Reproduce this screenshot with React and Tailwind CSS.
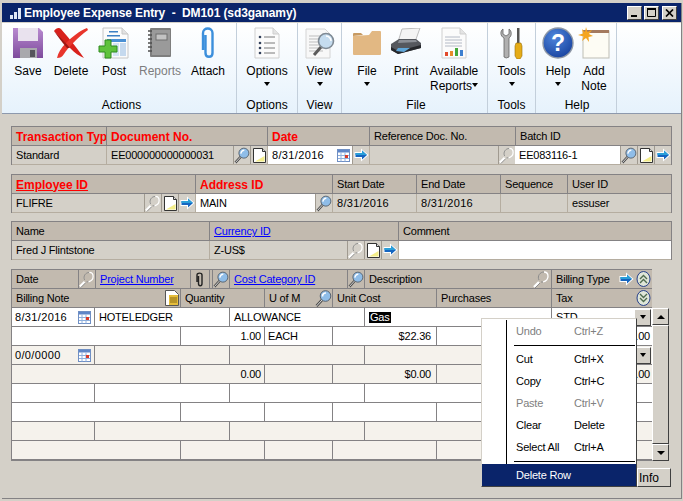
import React from "react";

const font = "[font-family:'Liberation_Sans',Arial,sans-serif]";

/* ---------- ribbon icons ---------- */
const SaveIcon = () => (
  <svg width="32" height="32" viewBox="0 0 32 32">
    <defs>
      <linearGradient id="fl" x1="0" y1="0" x2="0" y2="1">
        <stop offset="0" stopColor="#b98ad0" />
        <stop offset="1" stopColor="#7d4b9c" />
      </linearGradient>
    </defs>
    <path d="M1 1h26l4 4v26H1z" fill="url(#fl)" />
    <rect x="6" y="1" width="20" height="13" fill="#e9e2ee" />
    <rect x="8" y="21" width="17" height="10" fill="#a9a9ad" />
    <rect x="18" y="23" width="5" height="7" fill="#55555c" />
  </svg>
);

const DeleteIcon = () => (
  <svg width="34" height="32" viewBox="0 0 34 32">
    <path d="M0 4 C2 1 5 0 7 2 C13 9 20 17 30 31 C25 29 21 26 16 21 C10 15 5 10 0 4z" fill="#d8211c" />
    <path d="M33 1 C25 4 18 10 12 16 C7 21 4 26 3 31 C6 31 8 30 10 27 C14 21 23 11 34 3z" fill="#e8352c" />
    <path d="M0 4 C5 9 11 15 16 21 L13 21 C8 15 4 10 0 4z" fill="#9c1512" />
  </svg>
);

const PostIcon = () => (
  <svg width="32" height="32" viewBox="0 0 32 32">
    <path d="M5 1h19l6 6v24H5z" fill="#fbfbfb" stroke="#c6c6c6" />
    <path d="M24 1v6h6" fill="#e2e2e2" stroke="#c6c6c6" />
    <rect x="11" y="4" width="9" height="1.5" fill="#3d7fc4" />
    <rect x="9" y="8" width="13" height="1.5" fill="#3d7fc4" />
    <rect x="9" y="12" width="19" height="3" fill="#4a90d4" />
    <rect x="15" y="16" width="6" height="13" fill="#d5e4f3" />
    <rect x="22" y="16" width="6" height="13" fill="#c5d9ee" />
    <path d="M7 13h6v6h6v6h-6v6H7v-6H1v-6h6z" fill="#5fc23c" stroke="#2e8a1f" />
  </svg>
);

const ReportsIcon = () => (
  <svg width="24" height="32" viewBox="0 0 24 32">
    <rect x="2" y="1" width="21" height="29" rx="1" fill="#7e7e7e" />
    <rect x="4" y="3" width="18" height="25" fill="#9a9a9a" />
    <rect x="8" y="7" width="11" height="6" fill="#c3c3c3" stroke="#6e6e6e" />
    <path d="M0 4h4M0 8h4M0 12h4M0 16h4M0 20h4M0 24h4" stroke="#4d4d4d" strokeWidth="1.4" />
  </svg>
);

const AttachIcon = () => (
  <svg width="14" height="32" viewBox="0 0 14 32">
    <path d="M4 8 L4 26 C4 31 11 31 11 26 L11 6 C11 0 1.5 0 1.5 6 L1.5 23" transform="translate(0.5 0)" fill="none" stroke="#3c8fdc" strokeWidth="2.4" />
  </svg>
);

const OptionsIcon = () => (
  <svg width="26" height="32" viewBox="0 0 26 32">
    <path d="M1 1h18l6 6v24H1z" fill="#fbfbfb" stroke="#cfcfcf" />
    <path d="M19 1v6h6" fill="#e4e4e4" stroke="#cfcfcf" />
    <g fill="#33415c">
      <circle cx="6" cy="10" r="1.3" />
      <circle cx="6" cy="16" r="1.3" />
      <circle cx="6" cy="21" r="1.3" />
      <circle cx="6" cy="26" r="1.3" />
    </g>
    <path d="M10 10h11M10 16h11M10 21h11M10 26h11" stroke="#7a7a7a" />
  </svg>
);

const ViewIcon = () => (
  <svg width="32" height="32" viewBox="0 0 32 32">
    <path d="M2 2h19l5 5v24H2z" fill="#f8f8f8" stroke="#d4d4d4" />
    <path d="M5 9h14M5 12h12M5 15h11M5 18h12M5 21h14M5 24h14" stroke="#bdbdbd" />
    <path d="M17 20 L10 28" stroke="#5b5b5b" strokeWidth="3" />
    <circle cx="22" cy="14" r="7.5" fill="#c5dcef" stroke="#7f8a94" strokeWidth="1.6" />
    <path d="M22 9a5 5 0 0 1 5 5" stroke="#fff" strokeWidth="1.5" fill="none" />
  </svg>
);

const FolderIcon = () => (
  <svg width="28" height="24" viewBox="0 0 28 24">
    <path d="M0 3 Q0 2 1 2 L8 2 L10 4 L0 5z" fill="#c79a62" />
    <path d="M19 0 L27 0 Q28 0 28 1 L28 23 Q28 24 27 24 L1 24 Q0 24 0 23 L0 5 L16 4z" fill="#e2b883" />
  </svg>
);

const PrintIcon = () => (
  <svg width="32" height="30" viewBox="0 0 32 30">
    <path d="M12 1 L30 0 L25 14 L8 14z" fill="#f4f4f4" stroke="#bdbdbd" />
    <path d="M1 16 L9 11 L26 11 L31 15 L31 20 L8 26 L1 22z" fill="#55585e" />
    <path d="M1 19 L8 23 L31 17 L31 20 L8 26 L1 22z" fill="#25272b" />
    <path d="M8 20 L20 20 L14 24 L6 23z" fill="#5fa6d8" />
    <path d="M9 12 L26 12 L27 14 L8 15z" fill="#8b8f96" />
  </svg>
);

const AvailIcon = () => (
  <svg width="26" height="32" viewBox="0 0 26 32">
    <path d="M1 1h18l6 6v24H1z" fill="#fbfbfb" stroke="#cfcfcf" />
    <path d="M19 1v6h6" fill="#e4e4e4" stroke="#cfcfcf" />
    <path d="M4 10h15M4 13h17M4 16h17M4 19h17" stroke="#b4bac6" />
    <rect x="4" y="25" width="3" height="4" fill="#e2492a" />
    <rect x="9" y="24" width="3" height="5" fill="#e88a2a" />
    <rect x="14" y="21" width="3" height="8" fill="#45a83a" />
    <rect x="19" y="23" width="3" height="6" fill="#3c7fd0" />
  </svg>
);

const ToolsIcon = () => (
  <svg width="26" height="31" viewBox="0 0 26 31">
    <path d="M4 1 L4 6 L7 8 L10 6 L10 1 C13 3 13 8 10 10 L10 29 Q7 31 5 29 L5 10 C1 8 1 3 4 1z" fill="#b0b0b0" stroke="#666" strokeWidth="0.8" />
    <rect x="18" y="0" width="2.5" height="15" fill="#555" />
    <path d="M17 15h5l1 3v10l-2 3h-3l-2-3V18z" fill="#e5ac18" stroke="#97700d" strokeWidth="0.6" />
  </svg>
);

const HelpIcon = () => (
  <svg width="32" height="32" viewBox="0 0 32 32">
    <defs>
      <radialGradient id="hb" cx="0.4" cy="0.3" r="0.8">
        <stop offset="0" stopColor="#4f86dc" />
        <stop offset="1" stopColor="#143d9a" />
      </radialGradient>
    </defs>
    <circle cx="16" cy="16" r="15" fill="url(#hb)" stroke="#8f98a6" strokeWidth="1.4" />
    <text x="16" y="24" textAnchor="middle" fontSize="23" fontWeight="700" fill="#fff" fontFamily="Liberation Sans">?</text>
  </svg>
);

const NoteIcon32 = () => (
  <svg width="32" height="32" viewBox="0 0 32 32">
    <rect x="5" y="4" width="26" height="27" fill="#fdfcf4" stroke="#bdbdb4" />
    <rect x="5" y="3" width="26" height="3" fill="#a47a5e" />
    <path d="M8 0 L9.5 5 L14 3 L11 7 L15 9 L10.5 10 L11 15 L8 11 L4 14 L5.5 9.5 L0 8 L5 6.5 L4 2 L7 5z" fill="#f5a51e" />
  </svg>
);

/* ---------- small icons ---------- */
const Lookup = () => (
  <svg width="17" height="17" viewBox="0 0 17 17">
    <path d="M7 10 L1.5 16" stroke="#4a4a4a" strokeWidth="2.6" />
    <path d="M7 10 L1.5 16" stroke="#eee" strokeWidth="0.9" />
    <circle cx="10.5" cy="6" r="5.3" fill="#8fbde8" stroke="#59636e" />
    <path d="M7.5 6.5a3.2 3.2 0 0 1 3.5-3.5" stroke="#fff" fill="none" strokeWidth="1.6" />
  </svg>
);

const LookupOff = () => (
  <svg width="17" height="17" viewBox="0 0 17 17">
    <path d="M6 11 L1 16" stroke="#fff" strokeWidth="2.4" />
    <path d="M7 12 L2 17" stroke="#8c8c8c" />
    <path d="M6 9 C4 5 7 1 11 1" stroke="#8c8c8c" fill="none" />
    <path d="M11 1 C16 1 17 9 10 11" stroke="#fff" fill="none" strokeWidth="1.3" />
    <path d="M8 11 L10 11" stroke="#8c8c8c" />
  </svg>
);

const PageIcon = () => (
  <svg width="13" height="15" viewBox="0 0 13 15">
    <path d="M0.5 0.5h9l3 3v11h-12z" fill="#fff" stroke="#333" />
    <path d="M9.5 0.5v3h3" fill="#ddd" stroke="#333" />
    <path d="M2 13.5h9.5V8z" fill="#f4ee8a" />
  </svg>
);

const ArrowIcon = () => (
  <svg width="15" height="14" viewBox="0 0 15 14">
    <path d="M0.5 4h6.5V0.5L14.5 7 7 13.5V10H0.5z" fill="#fff" />
    <path d="M1.5 5h6.5V2.5L13 7l-5 4.5V9H1.5z" fill="#1565c0" />
    <path d="M1.5 5h6.5V2.5L13 7H1.5z" fill="#2a9fd8" />
  </svg>
);

const CalIcon = () => (
  <svg width="13" height="13" viewBox="0 0 13 13">
    <rect x="0.5" y="0.5" width="12" height="12" fill="#fff" stroke="#6f8fc4" />
    <rect x="1" y="1" width="11" height="2.5" fill="#5e86c8" />
    <path d="M4 3.5v9M8 3.5v9M1 6.5h11M1 9.5h11" stroke="#8fb0dd" />
    <rect x="8" y="6" width="3" height="3" fill="#d83a2a" />
  </svg>
);

const ClipIcon = () => (
  <svg width="8" height="15" viewBox="0 0 8 15">
    <path d="M2.5 4v7.5c0 3 3.5 3 3.5 0V3C6 0.5 1 0.5 1 3v7" fill="none" stroke="#222" strokeWidth="1.4" />
  </svg>
);

const BillIcon = () => (
  <svg width="15" height="16" viewBox="0 0 15 16">
    <path d="M0.5 0.5h9l4 4v11h-13z" fill="#fff" stroke="#555" />
    <rect x="4" y="5" width="9" height="10" fill="#e5bd3a" />
    <path d="M5 8h7M5 10h7M5 12h7" stroke="#8a6a14" />
  </svg>
);

const Chevrons = ({ up }) => (
  <svg width="15" height="16" viewBox="0 0 15 16">
    <ellipse cx="7.5" cy="8" rx="6.5" ry="7.5" fill="#dfe6d8" stroke="#27408b" />
    <path d={up ? "M4 8l3.5-3.5L11 8M4 12l3.5-3.5L11 12" : "M4 4l3.5 3.5L11 4M4 8l3.5 3.5L11 8"} fill="none" stroke="#4f6b4f" strokeWidth="1.4" />
  </svg>
);

const Caret = () => <span className="block w-0 h-0 border-x-[3px] border-x-transparent border-t-[4px] border-t-black" />;

/* ---------- ribbon ---------- */
const RibbonBtn = ({ w, icon, label, second, caret, muted }) => (
  <div className={`${w} flex flex-col items-center pt-[4px]`}>
    <div className="h-[32px] flex items-center justify-center">{icon}</div>
    <div className={`mt-[5px] text-center leading-[15px] whitespace-nowrap ${muted ? "text-[#7d7d7d]" : "text-black"}`}>
      {label}
      {second && <div className="flex items-center justify-center">{second}{caret === "inline" && <span className="-mt-[3px]"><Caret /></span>}</div>}
    </div>
    {caret === true && <div className="mt-[3px]"><Caret /></div>}
  </div>
);

const RibbonGroup = ({ w, pl, label, children }) => (
  <div className={`${w} ${pl} h-full flex flex-col border-r border-[#c3cfdb] text-[12px] tracking-normal`}>
    <div className="flex h-[74px]">{children}</div>
    <div className="mt-[1px] h-[15px] text-center leading-[15px] text-black">{label}</div>
  </div>
);

/* ---------- form cells ---------- */
const Hd = ({ w, red, link, children, first, extra = "" }) => (
  <div className={`${w} ${first ? "" : "border-l border-[#848284]"} ${extra} h-full flex items-center pl-[4px] pt-[1px] whitespace-nowrap overflow-hidden ${red ? "text-[#ff0000] font-bold text-[12px] tracking-normal" : link ? "text-[#0000ff]" : "text-black"}`}>
    {link ? <span className="underline">{children}</span> : children}
  </div>
);

const Val = ({ w, white, children, first, right }) => (
  <div className={`${w} ${first ? "" : "border-l border-[#b5ada0]"} h-full flex items-center pl-[4px] pt-[1px] whitespace-nowrap overflow-hidden ${white ? "bg-white" : ""} ${right ? "justify-end pr-[4px]" : ""}`}>
    {children}
  </div>
);

const Btn = ({ children, hd }) => (
  <div className={`w-[17px] shrink-0 h-full flex items-center justify-center border-l ${hd ? "border-[#848284]" : "border-[#a09a90]"}`}>{children}</div>
);

const DateText = ({ children }) => <span className="tracking-[0.35px]">{children}</span>;

const HeadRow = ({ children }) => <div className="flex h-[19px] bg-[#c2baaf] border-b border-[#848284]">{children}</div>;
const ValRow = ({ children }) => <div className="flex h-[19px] border-b border-[#b5ada0]">{children}</div>;
const Panel = ({ mt, children }) => (
  <div className={`${mt} ml-[9px] w-[661px] border-t border-x border-[#848284]`}>{children}</div>
);

/* ---------- grid ---------- */
const RowA = ({ alt, date, a, b, c, d, drop }) => (
  <div className={`flex h-[19px] border-b border-[#848284] ${alt ? "bg-[#f5f2ec]" : "bg-white"}`}>
    <div className="w-[83px] flex items-center pl-[3px] pr-[3px] justify-between border-r border-[#848284]">
      {date && <><span className="pt-[1px]"><DateText>{date}</DateText></span><CalIcon /></>}
    </div>
    <div className="w-[135px] flex items-center pl-[4px] pt-[1px] border-r border-[#848284]">{a}</div>
    <div className="w-[135px] flex items-center pl-[4px] pt-[1px] border-r border-[#848284]">{b}</div>
    <div className="w-[187px] flex items-center pl-[4px] pt-[1px] border-r border-[#848284]">{c}</div>
    <div className="flex-1 flex items-center pl-[4px] justify-between">
      <span className="pt-[1px]">{d}</span>
      {drop && (
        <div className="w-[17px] h-[17px] mr-[1px] flex items-center justify-center bg-[#d4d0c8] border border-t-white border-l-white border-r-[#404040] border-b-[#404040]"><Caret /></div>
      )}
    </div>
  </div>
);

const RowB = ({ alt, qty, uom, cost, tail }) => (
  <div className={`flex h-[19px] border-b border-[#848284] ${alt ? "bg-[#f5f2ec]" : "bg-white"}`}>
    <div className="w-[169px] border-r border-[#848284]" />
    <div className="w-[84px] flex items-center justify-end pr-[3px] pt-[1px] border-r border-[#848284]">{qty}</div>
    <div className="w-[68px] flex items-center pl-[3px] pt-[1px] border-r border-[#848284]">{uom}</div>
    <div className="w-[104px] flex items-center justify-end pr-[5px] pt-[1px] border-r border-[#848284]">{cost}</div>
    <div className="w-[115px] border-r border-[#848284]" />
    <div className="flex-1 flex items-center justify-end pr-[2px] pt-[1px]">{tail}</div>
  </div>
);

/* ---------- context menu ---------- */
const MenuItem = ({ label, keys, off }) => (
  <div className={`ml-[24px] h-[22px] flex items-center border-l border-black pl-[9px] ${off ? "text-[#808080]" : "text-black"}`}>
    <span className="w-[58px] whitespace-nowrap">{label}</span>
    <span className="whitespace-nowrap">{keys}</span>
  </div>
);

const MenuSep = () => (
  <div className="ml-[24px] h-[6px] flex items-center border-l border-black pl-[7px] pr-[1px]">
    <div className="w-full h-[1px] bg-black" />
  </div>
);

const ScrollBtn = ({ up }) => (
  <div className="h-[17px] flex items-center justify-center bg-[#d4d0c8] border border-t-white border-l-white border-r-[#404040] border-b-[#404040]">
    <span className={`block w-0 h-0 border-x-[4px] border-x-transparent ${up ? "border-b-[4px] border-b-black" : "border-t-[4px] border-t-black"}`} />
  </div>
);

const WinBtn = ({ children }) => (
  <div className="w-[15px] h-[14px] flex items-center justify-center bg-[#d4d0c8] border border-t-white border-l-white border-r-[#404040] border-b-[#404040]">{children}</div>
);

export default function App() {
  return (
    <div className={`relative w-[683px] h-[501px] overflow-hidden bg-[#d4d0c8] text-[11px] tracking-[-0.2px] text-black ${font}`}>
      <div className="ml-[2px] mt-[3px] w-[680px] h-[496px] border-r border-b border-[#848284]">
        {/* title bar */}
        <div className="h-[19px] bg-[#0a246a] flex items-center pl-[7px] pr-[4px]">
          <svg width="13" height="13" viewBox="0 0 13 13">
            <path d="M1 9h3v4H1zM5 6h3v7H5zM9 2h3v11H9z" fill="#dfe7f5" />
          </svg>
          <span className="ml-[2px] text-white font-bold text-[12px] whitespace-pre tracking-[-0.1px]">Employee Expense Entry  -  DM101 (sd3ganamy)</span>
          <div className="ml-auto flex">
            <WinBtn>
              <svg width="9" height="8" viewBox="0 0 9 8"><rect x="1" y="6" width="6" height="2" fill="#000" /></svg>
            </WinBtn>
            <div className="ml-[2px]">
              <WinBtn>
                <svg width="9" height="9" viewBox="0 0 9 9"><path d="M0.5 1.5h8v7h-8z" fill="none" stroke="#000" /><rect x="0" y="0" width="9" height="2" fill="#000" /></svg>
              </WinBtn>
            </div>
            <div className="ml-[3px]">
              <WinBtn>
                <svg width="9" height="8" viewBox="0 0 9 8"><path d="M1 0.5l7 7M8 0.5l-7 7" stroke="#000" strokeWidth="1.7" /></svg>
              </WinBtn>
            </div>
          </div>
        </div>

        {/* ribbon */}
        <div className="mt-[1px] h-[91px] flex bg-gradient-to-b from-white to-[#e6f2fc] border-b border-[#8d99ad]">
          <RibbonGroup w="w-[235px]" pl="pl-[5px]" label="Actions">
            <RibbonBtn w="w-[42px]" icon={<SaveIcon />} label="Save" />
            <RibbonBtn w="w-[44px]" icon={<DeleteIcon />} label="Delete" />
            <RibbonBtn w="w-[42px]" icon={<PostIcon />} label="Post" />
            <RibbonBtn w="w-[50px]" icon={<ReportsIcon />} label="Reports" muted />
            <RibbonBtn w="w-[46px]" icon={<AttachIcon />} label="Attach" />
          </RibbonGroup>
          <RibbonGroup w="w-[61px]" label="Options">
            <RibbonBtn w="w-full" icon={<OptionsIcon />} label="Options" caret />
          </RibbonGroup>
          <RibbonGroup w="w-[44px]" label="View">
            <RibbonBtn w="w-full" icon={<ViewIcon />} label="View" caret />
          </RibbonGroup>
          <RibbonGroup w="w-[146px]" pl="pl-[3px]" label="File">
            <RibbonBtn w="w-[44px]" icon={<FolderIcon />} label="File" caret />
            <RibbonBtn w="w-[34px]" icon={<PrintIcon />} label="Print" />
            <RibbonBtn w="w-[62px]" icon={<AvailIcon />} label="Available" second="Reports" caret="inline" />
          </RibbonGroup>
          <RibbonGroup w="w-[48px]" label="Tools">
            <RibbonBtn w="w-full" icon={<ToolsIcon />} label="Tools" caret />
          </RibbonGroup>
          <RibbonGroup w="w-[81px]" pl="pl-[2px]" label="Help">
            <RibbonBtn w="w-[40px]" icon={<HelpIcon />} label="Help" caret />
            <RibbonBtn w="w-[32px]" icon={<NoteIcon32 />} label="Add" second="Note" />
          </RibbonGroup>
        </div>

        {/* transaction header */}
        <Panel mt="mt-[12px]">
          <HeadRow>
            <Hd first w="w-[94px]" red>Transaction Typ</Hd>
            <Hd w="w-[161px]" red>Document No.</Hd>
            <Hd w="w-[102px]" red>Date</Hd>
            <Hd w="w-[146px]">Reference Doc. No.</Hd>
            <Hd w="flex-1">Batch ID</Hd>
          </HeadRow>
          <ValRow>
            <Val first w="w-[94px]">Standard</Val>
            <Val w="w-[127px]">EE000000000000031</Val>
            <Btn><Lookup /></Btn>
            <Btn><PageIcon /></Btn>
            <div className="w-[68px] h-full bg-white flex items-center pl-[4px] pt-[1px] border-l border-[#b5ada0]"><DateText>8/31/2016</DateText></div>
            <div className="w-[17px] h-full bg-white flex items-center justify-center"><CalIcon /></div>
            <Btn><ArrowIcon /></Btn>
            <Val w="w-[129px]" />
            <Btn><LookupOff /></Btn>
            <Val first white w="w-[105px]">EE083116-1</Val>
            <Btn><Lookup /></Btn>
            <Btn><PageIcon /></Btn>
            <Btn><ArrowIcon /></Btn>
          </ValRow>
        </Panel>

        {/* employee */}
        <Panel mt="mt-[9px]">
          <HeadRow>
            <Hd first w="w-[183px]" red><span className="underline">Employee ID</span></Hd>
            <Hd w="w-[137px]" red>Address ID</Hd>
            <Hd w="w-[84px]">Start Date</Hd>
            <Hd w="w-[84px]">End Date</Hd>
            <Hd w="w-[67px]">Sequence</Hd>
            <Hd w="flex-1">User ID</Hd>
          </HeadRow>
          <ValRow>
            <Val first w="w-[132px]">FLIFRE</Val>
            <Btn><LookupOff /></Btn>
            <Btn><PageIcon /></Btn>
            <Btn><ArrowIcon /></Btn>
            <Val white w="w-[120px]">MAIN</Val>
            <Btn><Lookup /></Btn>
            <Val w="w-[84px]"><DateText>8/31/2016</DateText></Val>
            <Val w="w-[84px]"><DateText>8/31/2016</DateText></Val>
            <Val w="w-[67px]" />
            <Val w="flex-1">essuser</Val>
          </ValRow>
        </Panel>

        {/* name / currency */}
        <Panel mt="mt-[8px]">
          <HeadRow>
            <Hd first w="w-[197px]">Name</Hd>
            <Hd w="w-[189px]" link>Currency ID</Hd>
            <Hd w="flex-1">Comment</Hd>
          </HeadRow>
          <ValRow>
            <Val first w="w-[197px]">Fred J Flintstone</Val>
            <Val w="w-[138px]">Z-US$</Val>
            <Btn><LookupOff /></Btn>
            <Btn><PageIcon /></Btn>
            <Btn><ArrowIcon /></Btn>
            <Val white w="flex-1" />
          </ValRow>
        </Panel>

        {/* line items */}
        <div className="mt-[9px] ml-[9px] w-[658px]">
          <div className="w-[641px] border-t border-l border-[#848284]">
            <HeadRow>
              <Hd first w="w-[66px]">Date</Hd>
              <Btn hd><LookupOff /></Btn>
              <Hd w="w-[95px]" link>Project Number</Hd>
              <div className="w-[20px] h-full flex items-center justify-center border-x border-[#848284]"><ClipIcon /></div>
              <div className="w-[17px] ml-[2px] h-full flex items-center justify-center border-l border-[#848284]"><Lookup /></div>
              <Hd w="w-[118px]" link>Cost Category ID</Hd>
              <Btn hd><Lookup /></Btn>
              <Hd w="w-[168px]">Description</Hd>
              <div className="w-[19px] h-full flex items-center justify-center"><LookupOff /></div>
              <Hd w="w-[66px]">Billing Type</Hd>
              <div className="w-[18px] h-full flex items-center justify-center"><ArrowIcon /></div>
              <div className="flex-1 h-full flex items-center justify-center"><Chevrons up /></div>
            </HeadRow>
            <HeadRow>
              <Hd first w="w-[153px]">Billing Note</Hd>
              <div className="w-[15px] h-full flex items-center justify-center"><BillIcon /></div>
              <Hd w="w-[84px]">Quantity</Hd>
              <Hd w="w-[51px]">U of M</Hd>
              <div className="w-[17px] h-full flex items-center justify-center"><Lookup /></div>
              <Hd w="w-[104px]">Unit Cost</Hd>
              <Hd w="w-[115px]">Purchases</Hd>
              <Hd w="w-[84px]">Tax</Hd>
              <div className="flex-1 h-full flex items-center justify-center"><Chevrons /></div>
            </HeadRow>
          </div>
          <div className="flex">
            <div className="w-[641px] border-l border-[#848284] border-b">
              <RowA date="8/31/2016" a="HOTELEDGER" b="ALLOWANCE" c={<span className="bg-black text-white px-[1px] leading-[11px]">Gas</span>} d="STD" drop />
              <RowB qty="1.00" uom="EACH" cost="$22.36" tail="$0.00" />
              <RowA alt date="0/0/0000" drop />
              <RowB alt qty="0.00" cost="$0.00" tail="$0.00" />
              <RowA />
              <RowB />
              <RowA alt />
              <RowB alt />
            </div>
            <div className="w-[17px] flex flex-col">
              <ScrollBtn up />
              <div className="flex-1 bg-[#d4d0c8] border border-t-white border-l-white border-r-[#404040] border-b-[#404040]" />
              <ScrollBtn />
            </div>
          </div>
        </div>

        {/* info button */}
        <div className="mt-[7px] ml-[635px] w-[34px] h-[19px] pl-[1px] flex items-center text-[12px] tracking-normal bg-[#d4d0c8] border border-t-white border-l-white border-r-[#404040] border-b-[#404040]">Info</div>
      </div>

      {/* context menu */}
      <div className="absolute left-[481px] top-[318px] w-[156px] h-[169px] pt-[1px] bg-white border border-t-[#d4d0c8] border-l-[#d4d0c8] border-r-[#404040] border-b-[#404040]">
        <MenuItem label="Undo" keys="Ctrl+Z" off />
        <MenuSep />
        <MenuItem label="Cut" keys="Ctrl+X" />
        <MenuItem label="Copy" keys="Ctrl+C" />
        <MenuItem label="Paste" keys="Ctrl+V" off />
        <MenuItem label="Clear" keys="Delete" />
        <MenuItem label="Select All" keys="Ctrl+A" />
        <MenuSep />
        <div className="h-[22px] bg-[#0a246a] text-white flex items-center pl-[34px]">Delete Row</div>
      </div>
    </div>
  );
}
